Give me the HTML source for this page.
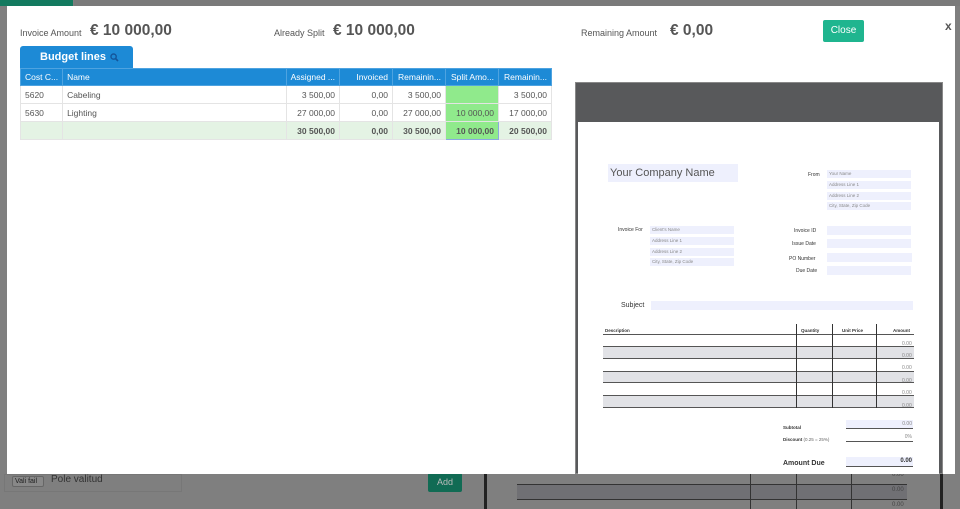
<!DOCTYPE html>
<html><head><style>
*{box-sizing:border-box;margin:0;padding:0}
body{width:960px;height:509px;overflow:hidden;background:#7f7f7f;font-family:"Liberation Sans",sans-serif;position:relative}
.abs{position:absolute}
.modal{position:absolute;left:7px;top:6px;width:948px;height:468px;background:#fff}
.lbl{position:absolute;font-size:9px;color:#555}
.big{position:absolute;font-size:15.5px;font-weight:bold;color:#555}
table{border-collapse:collapse;font-size:8.5px;color:#555}
td,th{height:18px;padding:0 4px;border:1px solid #e4e4e4;white-space:nowrap}
th{background:#1d8ad6;color:#fff;font-weight:normal;border-color:#4ea3e0;height:17px}
.r{text-align:right}
.tot td{background:#e4f3e4;font-weight:bold}
.g{background:#90ea8c!important}
.f{position:absolute;background:#eef0fd;font-size:4.5px;color:#888;padding-left:2px;line-height:8px}
.t{position:absolute;font-size:5px;color:#333}
</style></head><body>
<div class="abs" style="left:0;top:0;width:73px;height:6px;background:#137a5f"></div>
<div class="abs" style="left:74px;top:0;width:886px;height:6px;background:#7a7a7a"></div>
<div class="abs" style="left:4px;top:474px;width:178px;height:18px;border:1px solid #777"></div>
<div class="abs" style="left:12px;top:476px;width:32px;height:11px;border:1px solid #666;border-radius:2px;background:#888;font-size:7px;color:#222;padding:1px 2px">Vali fail</div>
<div class="abs" style="left:51px;top:474px;font-size:10px;color:#333">Pole valitud</div>
<div class="abs" style="left:428px;top:473px;width:34px;height:19px;background:#116b54;border-radius:2px;color:#bbb;font-size:9px;text-align:center;line-height:18px">Add</div>
<div class="abs" style="left:484px;top:473px;width:3px;height:36px;background:#222"></div>
<div class="abs" style="left:517px;top:484px;width:390px;height:1px;background:#333"></div>
<div class="abs" style="left:517px;top:499px;width:390px;height:1px;background:#333"></div>
<div class="abs" style="left:517px;top:485px;width:390px;height:14px;background:#707074"></div>
<div class="abs" style="left:750px;top:473px;width:1px;height:36px;background:#333"></div>
<div class="abs" style="left:796px;top:473px;width:1px;height:36px;background:#333"></div>
<div class="abs" style="left:851px;top:473px;width:1px;height:36px;background:#333"></div>
<div class="abs" style="left:940px;top:473px;width:3px;height:36px;background:#222"></div>
<div class="abs" style="left:892px;top:472px;font-size:6px;color:#444">0.00</div>
<div class="abs" style="left:892px;top:487px;font-size:6px;color:#444">0.00</div>
<div class="abs" style="left:892px;top:502px;font-size:6px;color:#444">0.00</div>

<div class="modal">
<div class="lbl" style="left:13px;top:22px">Invoice Amount</div>
<div class="big" style="left:83px;top:16px">€ 10 000,00</div>
<div class="lbl" style="left:267px;top:22px">Already Split</div>
<div class="big" style="left:326px;top:16px">€ 10 000,00</div>
<div class="lbl" style="left:574px;top:22px">Remaining Amount</div>
<div class="big" style="left:663px;top:16px">€ 0,00</div>
<div class="abs" style="left:816px;top:14px;width:41px;height:22px;background:#1fb58f;border-radius:2px;color:#fff;font-size:10px;text-align:center;line-height:22px">Close</div>
<div class="abs" style="left:938px;top:13px;font-size:12px;color:#555;font-weight:bold">x</div>

<div class="abs" style="left:13px;top:40px;width:113px;height:23px;background:#1d8ad6;border-radius:3px 3px 0 0;color:#fff;font-size:11px;font-weight:bold;line-height:22px;padding-left:20px">Budget lines
<svg style="position:absolute;left:90px;top:7px" width="9" height="9" viewBox="0 0 9 9"><circle cx="3.6" cy="3.6" r="2.6" fill="none" stroke="#14559a" stroke-width="1.4"/><path d="M5.5 5.5L8 8" stroke="#14559a" stroke-width="1.6"/></svg></div>
<table class="abs" style="left:13px;top:62px;width:532px">
<tr><th style="width:41px;text-align:left">Cost C...</th><th style="text-align:left">Name</th><th class="r" style="width:53px">Assigned ...</th><th class="r" style="width:53px">Invoiced</th><th class="r" style="width:53px">Remainin...</th><th class="r" style="width:53px">Split Amo...</th><th class="r" style="width:53px">Remainin...</th></tr>
<tr><td>5620</td><td>Cabeling</td><td class="r">3 500,00</td><td class="r">0,00</td><td class="r">3 500,00</td><td class="g"></td><td class="r">3 500,00</td></tr>
<tr><td>5630</td><td>Lighting</td><td class="r">27 000,00</td><td class="r">0,00</td><td class="r">27 000,00</td><td class="r g">10 000,00</td><td class="r">17 000,00</td></tr>
<tr class="tot"><td></td><td></td><td class="r">30 500,00</td><td class="r">0,00</td><td class="r">30 500,00</td><td class="r g" style="border:1px solid #8aa8e0">10 000,00</td><td class="r">20 500,00</td></tr>
</table>

<div class="abs" style="left:568px;top:76px;width:368px;height:392px;background:#58595b;border:1px solid #888"></div>
<div class="abs" style="left:571px;top:116px;width:361px;height:352px;background:#fff">
  <div class="abs" style="left:30px;top:42px;width:130px;height:18px;background:#eef0fd;font-size:11px;color:#555;padding:3px 2px">Your Company Name</div>
  <div class="t" style="left:230px;top:50px">From</div>
  <div class="f" style="left:249px;top:48px;width:84px">Your Name</div>
  <div class="f" style="left:249px;top:59px;width:84px">Address Line 1</div>
  <div class="f" style="left:249px;top:70px;width:84px">Address Line 2</div>
  <div class="f" style="left:249px;top:80px;width:84px">City, State, Zip Code</div>
  <div class="t" style="left:40px;top:105px">Invoice For</div>
  <div class="f" style="left:72px;top:104px;width:84px">Client's Name</div>
  <div class="f" style="left:72px;top:115px;width:84px">Address Line 1</div>
  <div class="f" style="left:72px;top:126px;width:84px">Address Line 2</div>
  <div class="f" style="left:72px;top:136px;width:84px">City, State, Zip Code</div>
  <div class="t" style="left:216px;top:106px">Invoice ID</div>
  <div class="t" style="left:214px;top:119px">Issue Date</div>
  <div class="t" style="left:211px;top:134px">PO Number</div>
  <div class="t" style="left:218px;top:146px">Due Date</div>
  <div class="f" style="left:249px;top:104px;width:84px;height:9px"></div>
  <div class="f" style="left:249px;top:117px;width:84px;height:9px"></div>
  <div class="f" style="left:249px;top:131px;width:85px;height:9px"></div>
  <div class="f" style="left:249px;top:144px;width:84px;height:9px"></div>
  <div class="t" style="left:43px;top:180px;font-size:7px">Subject</div>
  <div class="f" style="left:73px;top:179px;width:262px;height:9px"></div>
  <div class="t" style="left:27px;top:206px;font-weight:bold;font-size:4.5px">Description</div>
  <div class="t" style="left:223px;top:206px;font-weight:bold;font-size:4.5px">Quantity</div>
  <div class="t" style="left:264px;top:206px;font-weight:bold;font-size:4.5px">Unit Price</div>
  <div class="t" style="left:315px;top:206px;font-weight:bold;font-size:4.5px">Amount</div>
  <div class="abs" style="left:25px;top:212px;width:311px;height:1px;background:#555"></div>
  <div class="abs" style="left:25px;top:224px;width:311px;height:12px;background:#e1e2e6;border-top:1px solid #555"></div>
  <div class="abs" style="left:25px;top:249px;width:311px;height:12px;background:#e1e2e6;border-top:1px solid #555;border-bottom:1px solid #555"></div>
  <div class="abs" style="left:25px;top:273px;width:311px;height:13px;background:#e1e2e6;border-top:1px solid #555;border-bottom:1px solid #555"></div>
  <div class="abs" style="left:25px;top:236px;width:311px;height:1px;background:#555"></div>
  <div class="abs" style="left:218px;top:202px;width:1px;height:84px;background:#333"></div>
  <div class="abs" style="left:254px;top:202px;width:1px;height:84px;background:#333"></div>
  <div class="abs" style="left:298px;top:202px;width:1px;height:84px;background:#333"></div>
  <div class="t" style="left:324px;top:219px;color:#888">0.00</div>
  <div class="t" style="left:324px;top:231px;color:#888">0.00</div>
  <div class="t" style="left:324px;top:243px;color:#888">0.00</div>
  <div class="t" style="left:324px;top:256px;color:#888">0.00</div>
  <div class="t" style="left:324px;top:268px;color:#888">0.00</div>
  <div class="t" style="left:324px;top:281px;color:#888">0.00</div>
  <div class="t" style="left:205px;top:303px;font-weight:bold;font-size:4.5px">Subtotal</div>
  <div class="t" style="left:205px;top:315px;font-weight:bold;font-size:4.5px">Discount <span style="font-weight:normal;color:#666">(0.25 = 25%)</span></div>
  <div class="f" style="left:268px;top:298px;width:67px;height:9px;border-bottom:1px solid #555;text-align:right;font-size:5px;padding-right:1px">0.00</div>
  <div class="f" style="left:268px;top:311px;width:67px;height:9px;border-bottom:1px solid #555;text-align:right;font-size:5px;background:#fff;padding-right:1px">0%</div>
  <div class="t" style="left:205px;top:338px;font-weight:bold;font-size:7px">Amount Due</div>
  <div class="f" style="left:268px;top:335px;width:67px;height:10px;border-bottom:1px solid #555;text-align:right;font-size:6px;font-weight:bold;color:#333;padding-right:1px">0.00</div>
</div>
</div>
</body></html>
